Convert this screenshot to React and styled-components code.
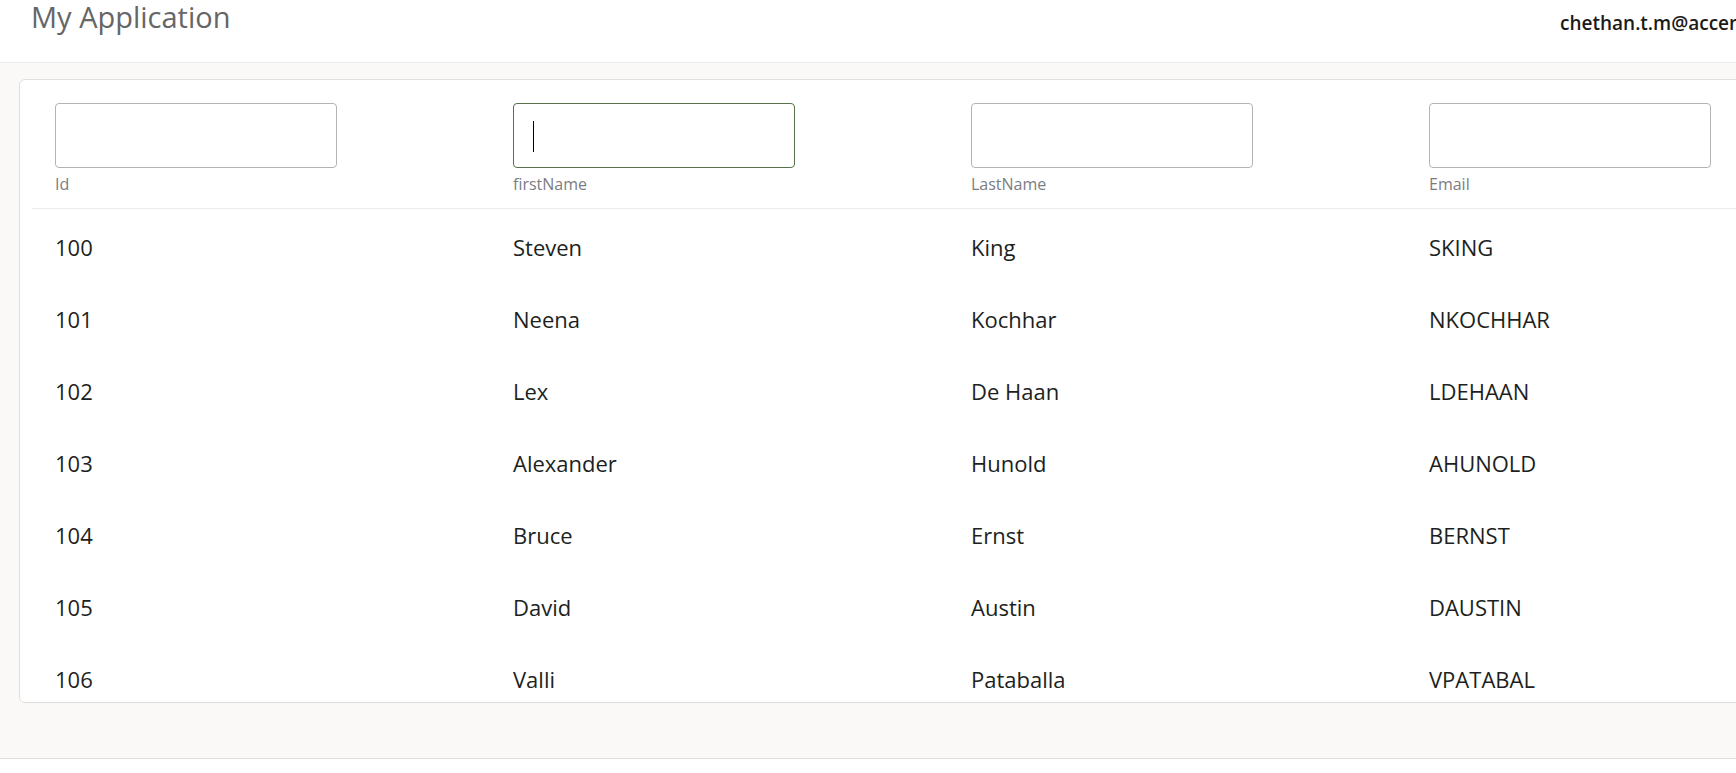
import React from 'react'
import styled, { createGlobalStyle } from 'styled-components'

const GlobalStyle = createGlobalStyle`
  html, body {
    margin: 0;
    padding: 0;
    overflow: hidden;
    background: #ffffff;
  }
  body {
    font-family: "Open Sans", "Noto Sans", Arial, sans-serif;
    color: #201f1e;
  }
`

const columns = [
  { key: 'id', label: 'Id' },
  { key: 'firstName', label: 'firstName' },
  { key: 'lastName', label: 'LastName' },
  { key: 'email', label: 'Email' },
]

const employees = [
  { id: 100, firstName: 'Steven', lastName: 'King', email: 'SKING' },
  { id: 101, firstName: 'Neena', lastName: 'Kochhar', email: 'NKOCHHAR' },
  { id: 102, firstName: 'Lex', lastName: 'De Haan', email: 'LDEHAAN' },
  { id: 103, firstName: 'Alexander', lastName: 'Hunold', email: 'AHUNOLD' },
  { id: 104, firstName: 'Bruce', lastName: 'Ernst', email: 'BERNST' },
  { id: 105, firstName: 'David', lastName: 'Austin', email: 'DAUSTIN' },
  { id: 106, firstName: 'Valli', lastName: 'Pataballa', email: 'VPATABAL' },
]

const App = () => {
  return (
    <Viewport>
      <GlobalStyle />
      <Page>
        <Header>
          <Brand>My Application</Brand>
          <UserEmail>chethan.t.m@accenture.com</UserEmail>
        </Header>
        <Main>
          <Card>
            <FilterRow>
              {columns.map((col) => (
                <FilterCell key={col.key}>
                  <InputBox>
                    <FilterInput $focused={col.key === 'firstName'} />
                    {col.key === 'firstName' && <Caret />}
                  </InputBox>
                  <FilterLabel>{col.label}</FilterLabel>
                </FilterCell>
              ))}
            </FilterRow>
            <Body>
              {employees.map((emp) => (
                <Row key={emp.id}>
                  {columns.map((col) => (
                    <Cell key={col.key}>{emp[col.key]}</Cell>
                  ))}
                </Row>
              ))}
            </Body>
          </Card>
        </Main>
        <Footer />
      </Page>
    </Viewport>
  )
}

export default App

const Viewport = styled.div`
  width: 100vw;
  height: 100vh;
  overflow: hidden;
`

const Page = styled.div`
  width: 2000px;
`

const Header = styled.header`
  display: flex;
  align-items: flex-start;
  height: 62px;
  border-bottom: 1px solid #edebe9;
  background: #ffffff;
`

const Brand = styled.div`
  flex: none;
  width: 1529px;
  padding-left: 31px;
  font-size: 29px;
  line-height: 34px;
  color: #666666;
`

const UserEmail = styled.div`
  padding-top: 10px;
  font-size: 19px;
  line-height: 26px;
  font-weight: 600;
  color: #1b1a19;
  white-space: nowrap;
`

const Main = styled.main`
  height: 695px;
  box-sizing: border-box;
  padding: 16px 19px 0;
  background: #faf9f8;
`

const Card = styled.section`
  height: 624px;
  box-sizing: border-box;
  padding-left: 12px;
  background: #ffffff;
  border: 1px solid #e1dfdd;
  border-radius: 6px;
  overflow: hidden;
`

const FilterRow = styled.div`
  display: grid;
  grid-template-columns: repeat(4, 458px) 1fr;
  padding: 23px 0 13px;
  border-bottom: 1px solid #edebe9;
`

const FilterCell = styled.div`
  display: flex;
  flex-direction: column;
  padding-left: 23px;
`

const InputBox = styled.div`
  position: relative;
  width: 282px;
`

const FilterInput = styled.input`
  display: block;
  width: 100%;
  height: 65px;
  box-sizing: border-box;
  margin: 0;
  padding: 0 20px;
  border: 1px solid ${({ $focused }) => ($focused ? '#58714c' : '#b5b3b1')};
  border-radius: 4px;
  background: #ffffff;
  font-family: inherit;
  font-size: 22px;
  outline: none;
`

const Caret = styled.span`
  position: absolute;
  left: 20px;
  top: 18px;
  width: 1px;
  height: 31px;
  background: #000000;
`

const FilterLabel = styled.div`
  margin-top: 5px;
  font-size: 16px;
  line-height: 22px;
  color: #7a7d82;
`

const Body = styled.div`
  padding-top: 2px;
`

const Row = styled.div`
  display: grid;
  grid-template-columns: repeat(4, 458px) 1fr;
  height: 72px;
  align-items: center;
`

const Cell = styled.div`
  padding-left: 23px;
  font-size: 22px;
  color: #201f1e;
  white-space: nowrap;
`

const Footer = styled.footer`
  height: 20px;
  border-top: 1px solid #e1dfdd;
  background: #ffffff;
`
